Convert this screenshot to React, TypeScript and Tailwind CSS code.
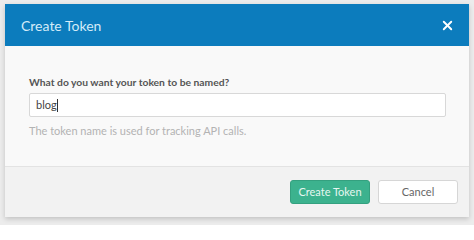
import { X } from "lucide-react";

const App = () => {
  return (
    <div
      className="w-[474px] h-[225px] bg-[#ececec] pt-[4px] pl-[5px] overflow-hidden"
      style={{ fontFamily: "Lato, 'Open Sans', Arial, sans-serif" }}
    >
      <div className="w-[464px] h-[213px] flex flex-col bg-[#f9f9f9] shadow-[0_2px_5px_rgba(0,0,0,0.18)]">
        <div className="h-[42px] bg-[#0c7cbd] flex items-center justify-between pl-[16px] pr-[14px]">
          <span className="text-[14px] text-[#d3ebf8]">Create Token</span>
          <X className="w-[15px] h-[15px] text-white" strokeWidth={3} />
        </div>
        <div className="flex-1 flex flex-col px-[24px] pt-[31px]">
          <label className="text-[10.3px] font-bold text-[#555] leading-none">
            What do you want your token to be named?
          </label>
          <div className="mt-[6px] h-[24px] w-[417px] bg-white border border-[#d8d8d8] rounded-[2px] flex items-center px-[6px]">
            <span className="text-[11px] text-[#444]">blog</span>
            <span className="w-px h-[13px] bg-[#333]" />
          </div>
          <p className="mt-[8px] text-[11px] text-[#b3b3b3] leading-none">
            The token name is used for tracking API calls.
          </p>
        </div>
        <div className="h-[51px] bg-[#f2f2f2] border-t border-[#e3e3e3] flex items-center justify-end gap-[8px] pr-[11px]">
          <button className="w-[80px] h-[24px] bg-[#3cb28e] rounded-[3px] text-[11px] text-[#e6f6f0] border border-[#34a07f]">
            Create Token
          </button>
          <button className="w-[80px] h-[24px] bg-white rounded-[3px] text-[11px] text-[#666] border border-[#d6d6d6]">
            Cancel
          </button>
        </div>
      </div>
    </div>
  );
};

export default App;
